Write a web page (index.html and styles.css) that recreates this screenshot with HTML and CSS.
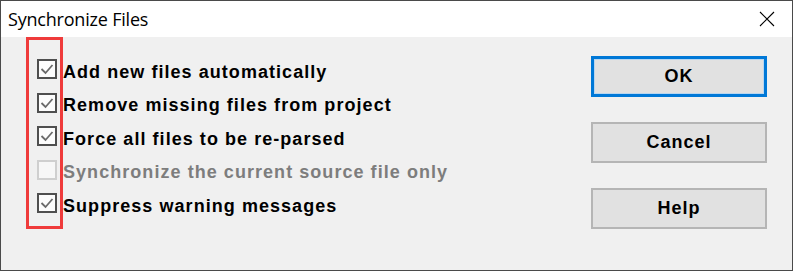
FILE: index.html
```html
<!DOCTYPE html>
<html>
<head>
<meta charset="utf-8">
<link rel="stylesheet" href="styles.css">
</head>
<body>
<div class="window">
  <div class="titlebar">
    <span class="title">Synchronize Files</span>
    <svg class="close" width="16" height="16" viewBox="0 0 16 16"><path d="M1 1 L15 15 M15 1 L1 15" stroke="#000" stroke-width="1.1" fill="none"/></svg>
  </div>
  <div class="content">
    <div class="options">
      <label class="row"><span class="box checked"><svg viewBox="0 0 16 16" width="16" height="16"><path d="M2.5 8 L6.5 12 L13.5 4" stroke="#6a6a6a" stroke-width="1.8" fill="none"/></svg></span><span class="text">Add new files automatically</span></label>
      <label class="row"><span class="box checked"><svg viewBox="0 0 16 16" width="16" height="16"><path d="M2.5 8 L6.5 12 L13.5 4" stroke="#6a6a6a" stroke-width="1.8" fill="none"/></svg></span><span class="text">Remove missing files from project</span></label>
      <label class="row"><span class="box checked"><svg viewBox="0 0 16 16" width="16" height="16"><path d="M2.5 8 L6.5 12 L13.5 4" stroke="#6a6a6a" stroke-width="1.8" fill="none"/></svg></span><span class="text">Force all files to be re-parsed</span></label>
      <label class="row disabled"><span class="box"></span><span class="text">Synchronize the current source file only</span></label>
      <label class="row"><span class="box checked"><svg viewBox="0 0 16 16" width="16" height="16"><path d="M2.5 8 L6.5 12 L13.5 4" stroke="#6a6a6a" stroke-width="1.8" fill="none"/></svg></span><span class="text">Suppress warning messages</span></label>
      <div class="highlight"></div>
    </div>
    <div class="buttons">
      <button class="btn default">OK</button>
      <button class="btn">Cancel</button>
      <button class="btn">Help</button>
    </div>
  </div>
</div>
</body>
</html>
```
FILE: styles.css
```css
html, body {
  margin: 0;
  padding: 0;
  background: #f0f0f0;
}
.window {
  width: 793px;
  height: 271px;
  box-sizing: border-box;
  border: 1px solid #4a4a4a;
  display: flex;
  flex-direction: column;
  background: #f0f0f0;
  overflow: hidden;
}
.titlebar {
  height: 36px;
  background: #fff;
  display: flex;
  align-items: center;
  justify-content: space-between;
  padding: 0 17px 0 7px;
  flex: none;
}
.title {
  font-family: "Open Sans", "Noto Sans", sans-serif;
  font-size: 18px;
  color: #000;
  letter-spacing: -0.2px;
}
.close {
  display: block;
}
.content {
  flex: 1;
  display: flex;
  justify-content: space-between;
  padding: 0 25px 0 36px;
}
.options {
  position: relative;
  display: flex;
  flex-direction: column;
  gap: 13.5px;
  padding-top: 22px;
}
.row {
  display: flex;
  align-items: center;
  height: 20px;
  gap: 6px;
  font-family: "Liberation Sans", Arial, sans-serif;
  font-weight: bold;
  font-size: 18px;
  color: #000;
}
.row .text {
  letter-spacing: 1.05px;
  padding-top: 6px;
}
.box {
  width: 20px;
  height: 20px;
  box-sizing: border-box;
  border: 2px solid #4f4f4f;
  background: #fcfcfc;
  display: flex;
  align-items: center;
  justify-content: center;
}
.box svg {
  display: block;
}
.disabled .box {
  border-color: #cfcfcf;
  background: #f7f7f7;
}
.disabled .text {
  color: #7d7d7d;
}
.highlight {
  position: absolute;
  left: -11px;
  top: 0;
  width: 37px;
  height: 192px;
  box-sizing: border-box;
  border: 3px solid #ef3b3b;
}
.buttons {
  display: flex;
  flex-direction: column;
  gap: 25px;
  padding-top: 19px;
}
.btn {
  width: 176px;
  height: 41px;
  box-sizing: border-box;
  background: #e1e1e1;
  border: 2px solid #b5b5b5;
  font-family: "Liberation Sans", Arial, sans-serif;
  font-weight: bold;
  font-size: 18px;
  color: #000;
  letter-spacing: 1px;
  padding: 0;
}
.btn.default {
  border: 3px solid #0078d7;
  box-shadow: inset 0 0 0 1px #b8d6f0;
}
```
